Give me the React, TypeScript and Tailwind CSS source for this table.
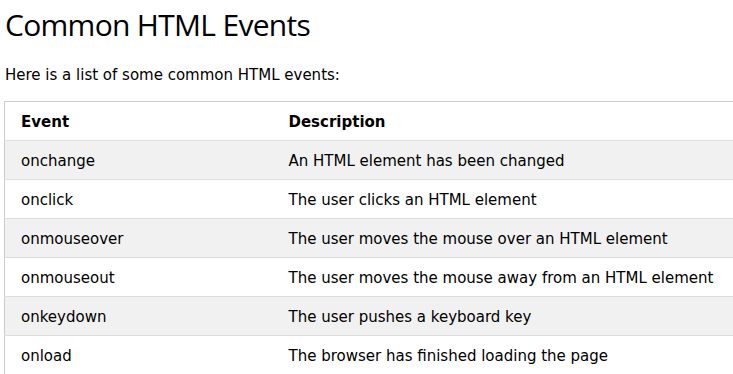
import React from "react";

const events = [
  { name: "onchange", desc: "An HTML element has been changed" },
  { name: "onclick", desc: "The user clicks an HTML element" },
  { name: "onmouseover", desc: "The user moves the mouse over an HTML element" },
  { name: "onmouseout", desc: "The user moves the mouse away from an HTML element" },
  { name: "onkeydown", desc: "The user pushes a keyboard key" },
  { name: "onload", desc: "The browser has finished loading the page" },
];

const App = () => {
  return (
    <div className="w-[733px] h-[374px] overflow-hidden bg-white text-black">
      <div className="pl-[4px]">
        <h2
          className="pl-[1px] pt-[5px] text-[30px] leading-[40px] tracking-[-0.7px] font-normal"
          style={{ fontFamily: '"Open Sans", "Noto Sans", sans-serif' }}
        >
          Common HTML Events
        </h2>
        <p
          className="pl-[1px] mt-[19px] text-[15px] leading-[22px]"
          style={{ fontFamily: '"DejaVu Sans", Verdana, sans-serif' }}
        >
          Here is a list of some common HTML events:
        </p>
        <table
          className="mt-[15px] w-[780px] border-collapse border border-[#cccccc] text-[15px]"
          style={{ fontFamily: '"DejaVu Sans", Verdana, sans-serif' }}
        >
          <tbody>
            <tr className="h-[39px] bg-white border-b border-[#dddddd]">
              <th className="w-[268px] pl-[16px] pt-[2px] text-left font-bold">Event</th>
              <th className="pl-[16px] pt-[2px] text-left font-bold">Description</th>
            </tr>
            {events.map((e, i) => (
              <tr
                key={e.name}
                className={
                  "h-[39px] border-b border-[#dddddd] " +
                  (i % 2 === 0 ? "bg-[#f1f1f1]" : "bg-white")
                }
              >
                <td className="pl-[16px] pt-[2px]">{e.name}</td>
                <td className="pl-[16px] pt-[2px]">{e.desc}</td>
              </tr>
            ))}
          </tbody>
        </table>
      </div>
    </div>
  );
};

export default App;
